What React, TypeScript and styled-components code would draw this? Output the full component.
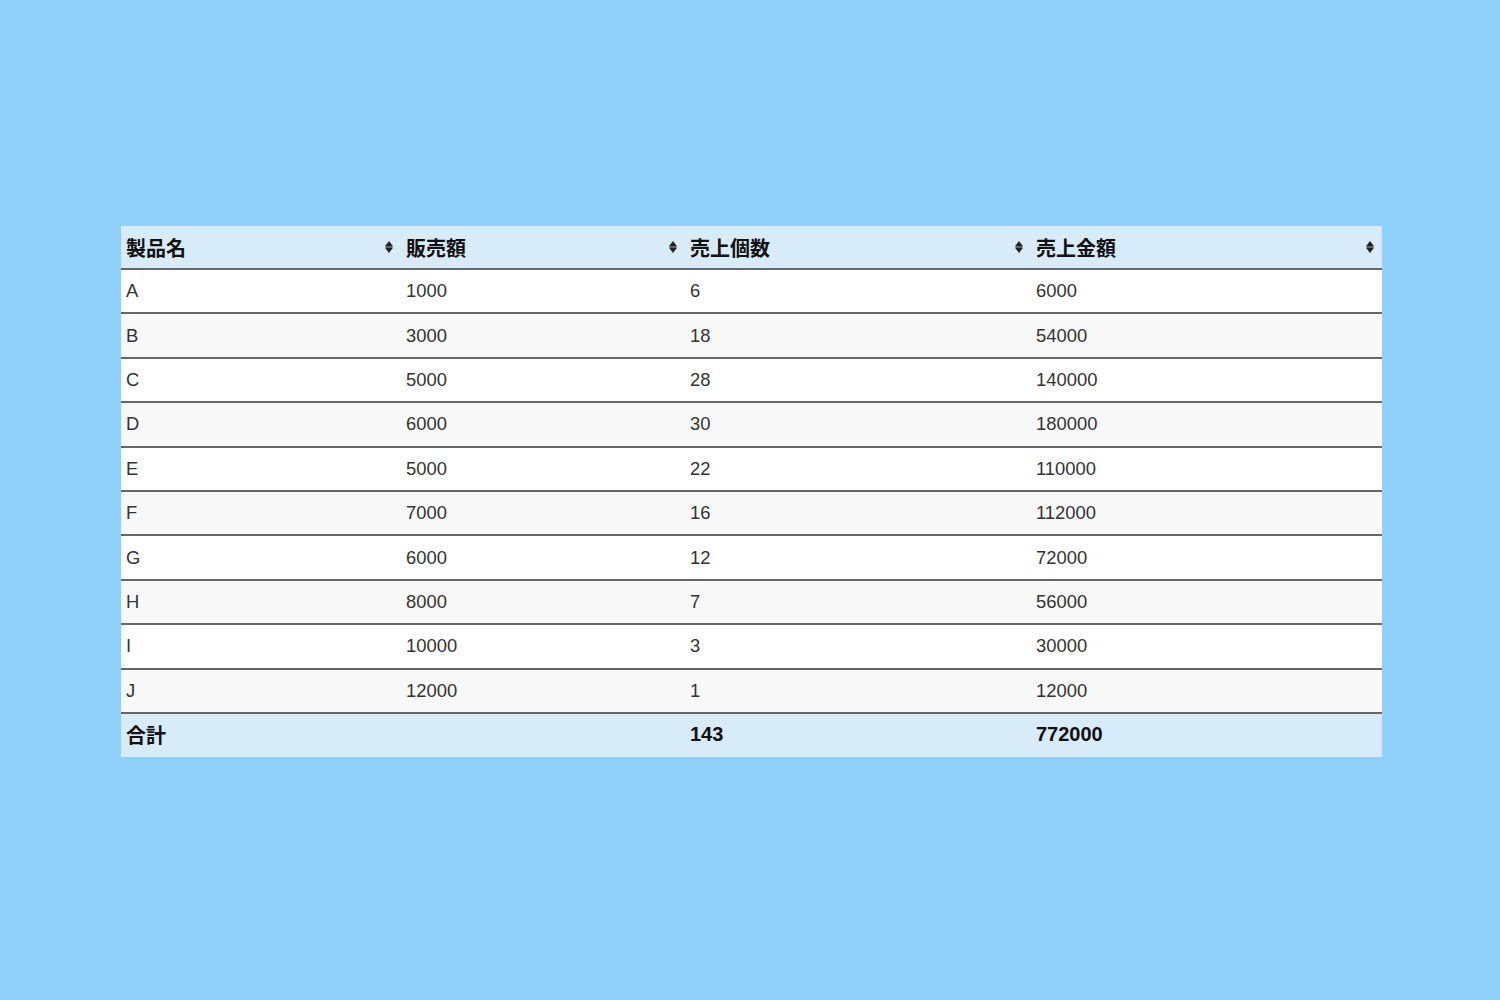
import styled, { createGlobalStyle } from 'styled-components'

const GlobalStyle = createGlobalStyle`
  html, body {
    margin: 0;
    padding: 0;
    background: #8fd0fa;
  }
  body {
    font-family: "Liberation Sans", "Noto Sans CJK JP", sans-serif;
  }
`

const COLUMNS = '280px 284px 346px 351px'

const St = {
  Page: styled.div`
    width: 1500px;
    height: 1000px;
    box-sizing: border-box;
    padding: 226px 0 0 121px;
  `,
  Table: styled.div`
    width: 1261px;
    display: flex;
    flex-direction: column;
  `,
  HeadRow: styled.div`
    display: grid;
    grid-template-columns: ${COLUMNS};
    height: 42px;
    background: #d8ebf8;
  `,
  HeadCell: styled.div`
    display: flex;
    align-items: center;
    justify-content: space-between;
    padding: 0 8px 0 5px;
    font-size: 20px;
    font-weight: 700;
    color: #111;
  `,
  Row: styled.div<{ $striped: boolean }>`
    display: grid;
    grid-template-columns: ${COLUMNS};
    box-sizing: border-box;
    height: 44.4px;
    border-top: 2px solid #666;
    background: ${({ $striped }) => ($striped ? '#f8f8f8' : '#ffffff')};
  `,
  Cell: styled.div`
    display: flex;
    align-items: center;
    padding: 0 5px;
    font-size: 18.4px;
    color: #333;
  `,
  FootRow: styled.div`
    display: grid;
    grid-template-columns: ${COLUMNS};
    box-sizing: border-box;
    height: 45px;
    border-top: 2px solid #666;
    background: #d8ebf8;
  `,
  FootCell: styled.div`
    display: flex;
    align-items: center;
    padding: 0 5px 2px;
    font-size: 20px;
    font-weight: 700;
    color: #111;
  `,
}

const SortIcon = () => (
  <svg width="8" height="12" viewBox="0 0 8 12">
    <path d="M4 0.5 L7.5 5.2 L0.5 5.2 Z" fill="#222" stroke="#222" strokeWidth="0.8" strokeLinejoin="round" />
    <path d="M4 11.5 L7.5 6.8 L0.5 6.8 Z" fill="#222" stroke="#222" strokeWidth="0.8" strokeLinejoin="round" />
  </svg>
)

const headers = ['製品名', '販売額', '売上個数', '売上金額']

const rows: [string, number, number, number][] = [
  ['A', 1000, 6, 6000],
  ['B', 3000, 18, 54000],
  ['C', 5000, 28, 140000],
  ['D', 6000, 30, 180000],
  ['E', 5000, 22, 110000],
  ['F', 7000, 16, 112000],
  ['G', 6000, 12, 72000],
  ['H', 8000, 7, 56000],
  ['I', 10000, 3, 30000],
  ['J', 12000, 1, 12000],
]

const App = () => {
  const totalCount = rows.reduce((sum, r) => sum + r[2], 0)
  const totalAmount = rows.reduce((sum, r) => sum + r[3], 0)
  return (
    <>
      <GlobalStyle />
      <St.Page>
        <St.Table>
          <St.HeadRow>
            {headers.map((h) => (
              <St.HeadCell key={h}>
                <span>{h}</span>
                <SortIcon />
              </St.HeadCell>
            ))}
          </St.HeadRow>
          {rows.map((r, i) => (
            <St.Row key={r[0]} $striped={i % 2 === 1}>
              {r.map((v, j) => (
                <St.Cell key={j}>{v}</St.Cell>
              ))}
            </St.Row>
          ))}
          <St.FootRow>
            <St.FootCell>合計</St.FootCell>
            <St.FootCell />
            <St.FootCell>{totalCount}</St.FootCell>
            <St.FootCell>{totalAmount}</St.FootCell>
          </St.FootRow>
        </St.Table>
      </St.Page>
    </>
  )
}

export default App
